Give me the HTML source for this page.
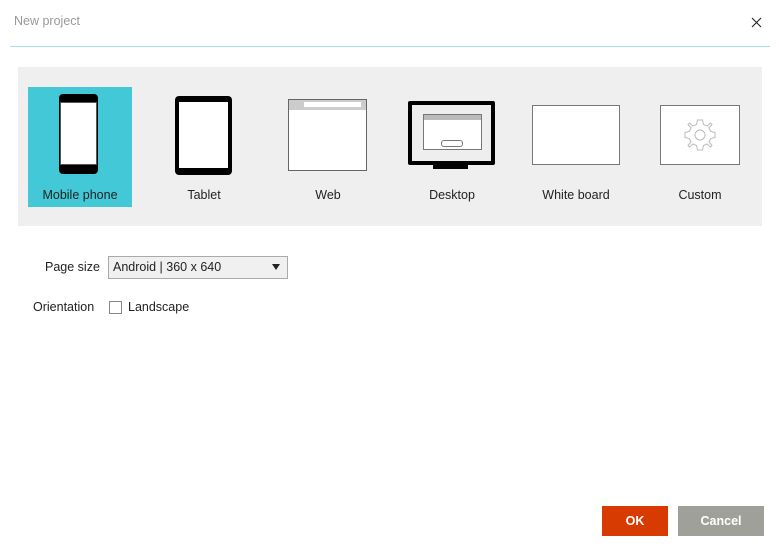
<!DOCTYPE html>
<html><head><style>
body{margin:0;width:779px;height:552px;background:#fff;font-family:"Liberation Sans",sans-serif;position:relative;overflow:hidden;font-size:12.5px;color:#222}
.a{position:absolute}
.lbl{position:absolute;top:188px;width:104px;text-align:center;font-size:12.5px;color:#222}
</style></head><body>
<div class="a" style="left:14px;top:14px;font-size:12.5px;color:#999">New project</div>
<svg class="a" style="left:751px;top:17px" width="11" height="11"><path d="M1 1L10 10M10 1L1 10" stroke="#222" stroke-width="1.1"/></svg>
<div class="a" style="left:10px;top:46px;width:760px;height:1px;background:#9fe3ec"></div>
<div class="a" style="left:18px;top:67px;width:744px;height:159px;background:#efefef"></div>
<div class="a" style="left:28px;top:87px;width:104px;height:120px;background:#42c8d6"></div>
<div class="a" style="left:59px;top:94px;width:39px;height:80px;background:#000;border-radius:4px"></div>
<div class="a" style="left:61px;top:103px;width:35px;height:61px;background:#fff;box-shadow:0 0 0 1px #555"></div>
<div class="a" style="left:175px;top:96px;width:57px;height:79px;background:#000;border-radius:4px"></div>
<div class="a" style="left:179px;top:102px;width:49px;height:66px;background:#fff"></div>
<div class="a" style="left:288px;top:99px;width:77px;height:70px;background:#fff;border:1px solid #666"></div>
<div class="a" style="left:289px;top:100px;width:77px;height:10px;background:#ccc"></div>
<div class="a" style="left:304px;top:102px;width:57px;height:5px;background:#fff"></div>
<div class="a" style="left:408px;top:101px;width:79px;height:56px;background:#eee;border:4px solid #000;border-radius:2px"></div>
<div class="a" style="left:433px;top:164px;width:35px;height:5px;background:#000"></div>
<div class="a" style="left:423px;top:114px;width:57px;height:34px;background:#fff;border:1px solid #777"></div>
<div class="a" style="left:424px;top:115px;width:57px;height:5px;background:#bbb"></div>
<div class="a" style="left:441px;top:140px;width:20px;height:5px;border:1px solid #777;border-radius:3px;background:#fff"></div>
<div class="a" style="left:532px;top:105px;width:86px;height:58px;background:#fff;border:1px solid #777"></div>
<div class="a" style="left:660px;top:105px;width:78px;height:58px;background:#fff;border:1px solid #777"></div>
<svg class="a" style="left:682px;top:117px" width="36" height="36" viewBox="-18 -18 36 36"><path fill="none" stroke="#bbb" stroke-width="1" d="M-2.5,-15 L2.5,-15 L3.5,-10.5 L7,-9 L10.5,-12 L12,-10.5 L9,-7 L10.5,-3.5 L15,-2.5 L15,2.5 L10.5,3.5 L9,7 L12,10.5 L10.5,12 L7,9 L3.5,10.5 L2.5,15 L-2.5,15 L-3.5,10.5 L-7,9 L-10.5,12 L-12,10.5 L-9,7 L-10.5,3.5 L-15,2.5 L-15,-2.5 L-10.5,-3.5 L-9,-7 L-12,-10.5 L-10.5,-12 L-7,-9 L-3.5,-10.5 Z"/><circle r="5" fill="none" stroke="#bbb"/></svg>
<div class="lbl" style="left:28px">Mobile phone</div>
<div class="lbl" style="left:152px">Tablet</div>
<div class="lbl" style="left:276px">Web</div>
<div class="lbl" style="left:400px">Desktop</div>
<div class="lbl" style="left:524px">White board</div>
<div class="lbl" style="left:648px">Custom</div>
<div class="a" style="left:45px;top:260px">Page size</div>
<div class="a" style="left:108px;top:256px;width:178px;height:21px;background:#f0f0f0;border:1px solid #aaa"></div>
<div class="a" style="left:113px;top:260px">Android | 360 x 640</div>
<svg class="a" style="left:272px;top:264px" width="8" height="6"><path d="M0 0H8L4 6Z" fill="#222"/></svg>
<div class="a" style="left:33px;top:300px">Orientation</div>
<div class="a" style="left:109px;top:301px;width:11px;height:11px;border:1px solid #888;background:#fff"></div>
<div class="a" style="left:128px;top:300px">Landscape</div>
<div class="a" style="left:602px;top:506px;width:66px;height:30px;background:#d83b01;color:#fff;font-weight:bold;text-align:center;line-height:30px">OK</div>
<div class="a" style="left:678px;top:506px;width:86px;height:30px;background:#a0a09b;color:#fff;font-weight:bold;text-align:center;line-height:30px">Cancel</div>
</body></html>
